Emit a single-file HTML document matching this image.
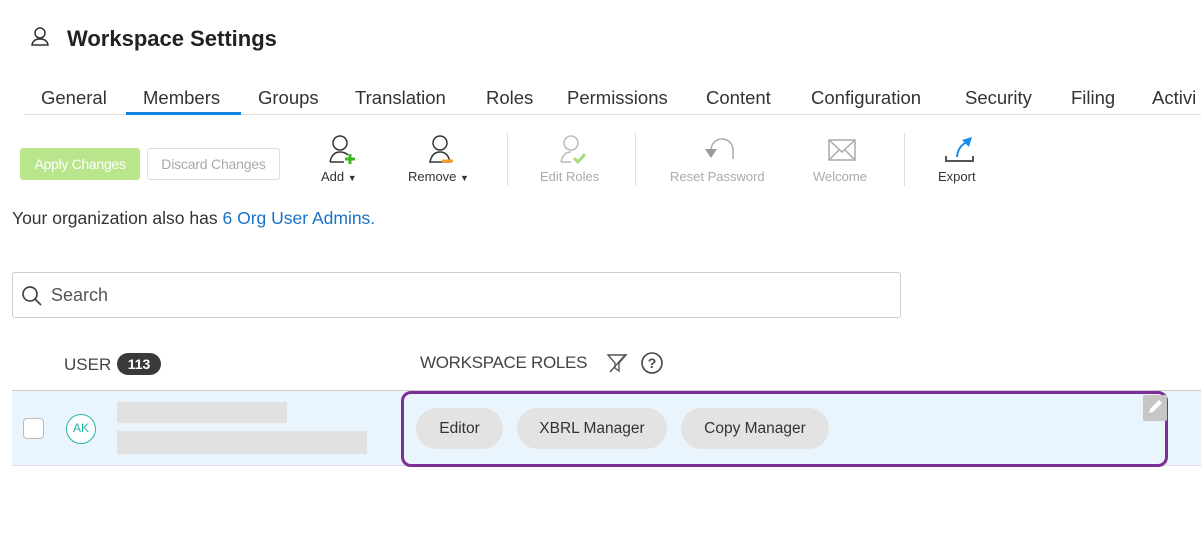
<!DOCTYPE html>
<html><head><meta charset="utf-8"><style>
*{margin:0;padding:0;box-sizing:border-box}
body{width:1201px;height:552px;background:#fff;position:relative;overflow:hidden;font-family:"Liberation Sans",sans-serif;color:#333}
.a{position:absolute;white-space:nowrap}
.tab{position:absolute;top:87px;font-size:18.5px;color:#333}
.tb{position:absolute;top:169px;font-size:13px;color:#333;text-align:center}
.dis{color:#aaa}
.sep{position:absolute;top:133px;width:1px;height:53px;background:#ddd}
.pill{position:absolute;top:408px;height:41px;border-radius:21px;background:#e3e3e3;font-size:15.5px;line-height:42px;text-align:center;color:#333}
</style></head><body>
<svg class="a" style="left:31px;top:27px" width="18" height="20" viewBox="0 0 18 20"><circle cx="9" cy="6" r="5" fill="none" stroke="#333" stroke-width="1.5"/><path d="M1 18 Q2 12 9 12 Q16 12 17 18 Z" fill="none" stroke="#333" stroke-width="1.5"/></svg>
<div class="a" style="left:67px;top:26px;font-size:22px;font-weight:bold;color:#222">Workspace Settings</div>

<div class="tab" style="left:41px">General</div>
<div class="tab" style="left:143px">Members</div>
<div class="tab" style="left:258px">Groups</div>
<div class="tab" style="left:355px">Translation</div>
<div class="tab" style="left:486px">Roles</div>
<div class="tab" style="left:567px">Permissions</div>
<div class="tab" style="left:706px">Content</div>
<div class="tab" style="left:811px">Configuration</div>
<div class="tab" style="left:965px">Security</div>
<div class="tab" style="left:1071px">Filing</div>
<div class="tab" style="left:1152px">Activi</div>
<div class="a" style="left:24px;top:114px;width:1177px;height:1px;background:#ddd"></div>
<div class="a" style="left:126px;top:112px;width:115px;height:3px;background:#0a84e0"></div>

<div class="a" style="left:20px;top:148px;width:120px;height:32px;background:#b9e58c;border-radius:3px;color:#fff;font-size:14px;line-height:33px;text-align:center;letter-spacing:-0.3px">Apply Changes</div>
<div class="a" style="left:147px;top:148px;width:133px;height:32px;border:1px solid #ddd;border-radius:3px;color:#aaa;font-size:14px;line-height:31px;text-align:center;letter-spacing:-0.2px">Discard Changes</div>

<svg class="a" style="left:328px;top:134px" width="28" height="30" viewBox="0 0 28 30"><circle cx="12" cy="9" r="7" fill="none" stroke="#333" stroke-width="1.5"/><path d="M2 28 Q4 18 12 18 Q17 18 20 21" fill="none" stroke="#333" stroke-width="1.5"/><path d="M2 28h14" stroke="#333" stroke-width="1.5"/><path d="M22 20v10M17 25h10" stroke="#3cb81e" stroke-width="3"/></svg>
<div class="tb" style="left:321px">Add <span style="font-size:9px">▼</span></div>
<svg class="a" style="left:428px;top:134px" width="28" height="30" viewBox="0 0 28 30"><circle cx="12" cy="9" r="7" fill="none" stroke="#333" stroke-width="1.5"/><path d="M2 28 Q4 18 12 18 Q20 18 22 28 Z" fill="none" stroke="#333" stroke-width="1.5"/><path d="M14 27h11" stroke="#f0a030" stroke-width="3"/></svg>
<div class="tb" style="left:408px">Remove <span style="font-size:9px">▼</span></div>
<div class="sep" style="left:507px"></div>
<svg class="a" style="left:559px;top:134px" width="28" height="30" viewBox="0 0 28 30"><circle cx="12" cy="9" r="7" fill="none" stroke="#bbb" stroke-width="1.5"/><path d="M2 28 Q4 18 12 18" fill="none" stroke="#bbb" stroke-width="1.5"/><path d="M2 28h10" stroke="#bbb" stroke-width="1.5"/><path d="M15 24l4 4 7-8" fill="none" stroke="#a6dd80" stroke-width="3"/></svg>
<div class="tb dis" style="left:540px">Edit Roles</div>
<div class="sep" style="left:635px"></div>
<svg class="a" style="left:702px;top:137px" width="34" height="26" viewBox="0 0 34 26"><path d="M31 22 V14 A11 11 0 0 0 9 12" fill="none" stroke="#aaa" stroke-width="1.5"/><path d="M3 12h12l-6 9z" fill="#999"/></svg>
<div class="tb dis" style="left:670px">Reset Password</div>
<svg class="a" style="left:828px;top:138px" width="28" height="24" viewBox="0 0 28 24"><rect x="1" y="2" width="26" height="20" fill="none" stroke="#aaa" stroke-width="1.5"/><path d="M1 2l13 12 13-12M1 22l10-10M27 22l-10-10" fill="none" stroke="#aaa" stroke-width="1.5"/></svg>
<div class="tb dis" style="left:813px">Welcome</div>
<div class="sep" style="left:904px"></div>
<svg class="a" style="left:944px;top:136px" width="32" height="28" viewBox="0 0 32 28"><path d="M2 20v5h27v-5" fill="none" stroke="#555" stroke-width="2"/><path d="M13 21 Q14 10 23 6" fill="none" stroke="#1a8be8" stroke-width="2"/><path d="M18 4l10-3-3 10z" fill="#1a8be8"/></svg>
<div class="tb" style="left:938px">Export</div>

<div class="a" style="left:12px;top:208px;font-size:17.5px;color:#333">Your organization also has <span style="color:#1a73c9">6 Org User Admins.</span></div>

<div class="a" style="left:12px;top:272px;width:889px;height:46px;border:1px solid #ccc;border-radius:3px"></div>
<svg class="a" style="left:21px;top:285px" width="22" height="22" viewBox="0 0 22 22"><circle cx="9" cy="9" r="7" fill="none" stroke="#444" stroke-width="1.7"/><path d="M14 14l6 6" stroke="#444" stroke-width="1.8"/></svg>
<div class="a" style="left:51px;top:285px;font-size:18px;color:#555">Search</div>

<div class="a" style="left:64px;top:355px;font-size:17px;color:#444">USER</div>
<div class="a" style="left:117px;top:353px;width:44px;height:22px;border-radius:11px;background:#3a3a3a;color:#fff;font-size:14px;font-weight:bold;line-height:22px;text-align:center">113</div>
<div class="a" style="left:420px;top:353px;font-size:17px;color:#444;letter-spacing:-0.3px">WORKSPACE ROLES</div>
<svg class="a" style="left:606px;top:352px" width="22" height="22" viewBox="0 0 22 22"><path d="M2 3h18l-7 8v8l-4-3v-5z" fill="none" stroke="#555" stroke-width="1.4"/><path d="M4 20L20 2" stroke="#555" stroke-width="1.4"/></svg>
<svg class="a" style="left:640px;top:351px" width="24" height="24" viewBox="0 0 24 24"><circle cx="12" cy="12" r="10" fill="none" stroke="#444" stroke-width="1.6"/><text x="12" y="17" font-size="14" font-weight="bold" text-anchor="middle" fill="#444" font-family="Liberation Sans">?</text></svg>

<div class="a" style="left:12px;top:390px;width:1189px;height:1px;background:#ccc"></div>
<div class="a" style="left:12px;top:391px;width:1189px;height:75px;background:#eaf4fd;border-bottom:1px solid #dde"></div>
<div class="a" style="left:23px;top:418px;width:21px;height:21px;background:#fff;border:1px solid #bbb;border-radius:4px"></div>
<div class="a" style="left:66px;top:414px;width:30px;height:30px;border:1.5px solid #26b5a8;border-radius:50%;background:#fff;color:#26b5a8;font-size:12px;line-height:27px;text-align:center">AK</div>
<div class="a" style="left:117px;top:402px;width:170px;height:21px;background:#e1e1e1"></div>
<div class="a" style="left:117px;top:431px;width:250px;height:23px;background:#e1e1e1"></div>
<div class="a" style="left:401px;top:391px;width:767px;height:76px;border:3px solid #7b2f94;border-radius:10px"></div>
<div class="pill" style="left:416px;width:87px">Editor</div>
<div class="pill" style="left:517px;width:150px">XBRL Manager</div>
<div class="pill" style="left:681px;width:148px">Copy Manager</div>
<div class="a" style="left:1143px;top:395px;width:24px;height:26px;background:#c6c6c6;border-radius:2px"></div>
<svg class="a" style="left:1145px;top:397px" width="20" height="20" viewBox="0 0 20 20"><path d="M4 16l1-4 9-9 3 3-9 9z" fill="#fff"/></svg>
</body></html>
